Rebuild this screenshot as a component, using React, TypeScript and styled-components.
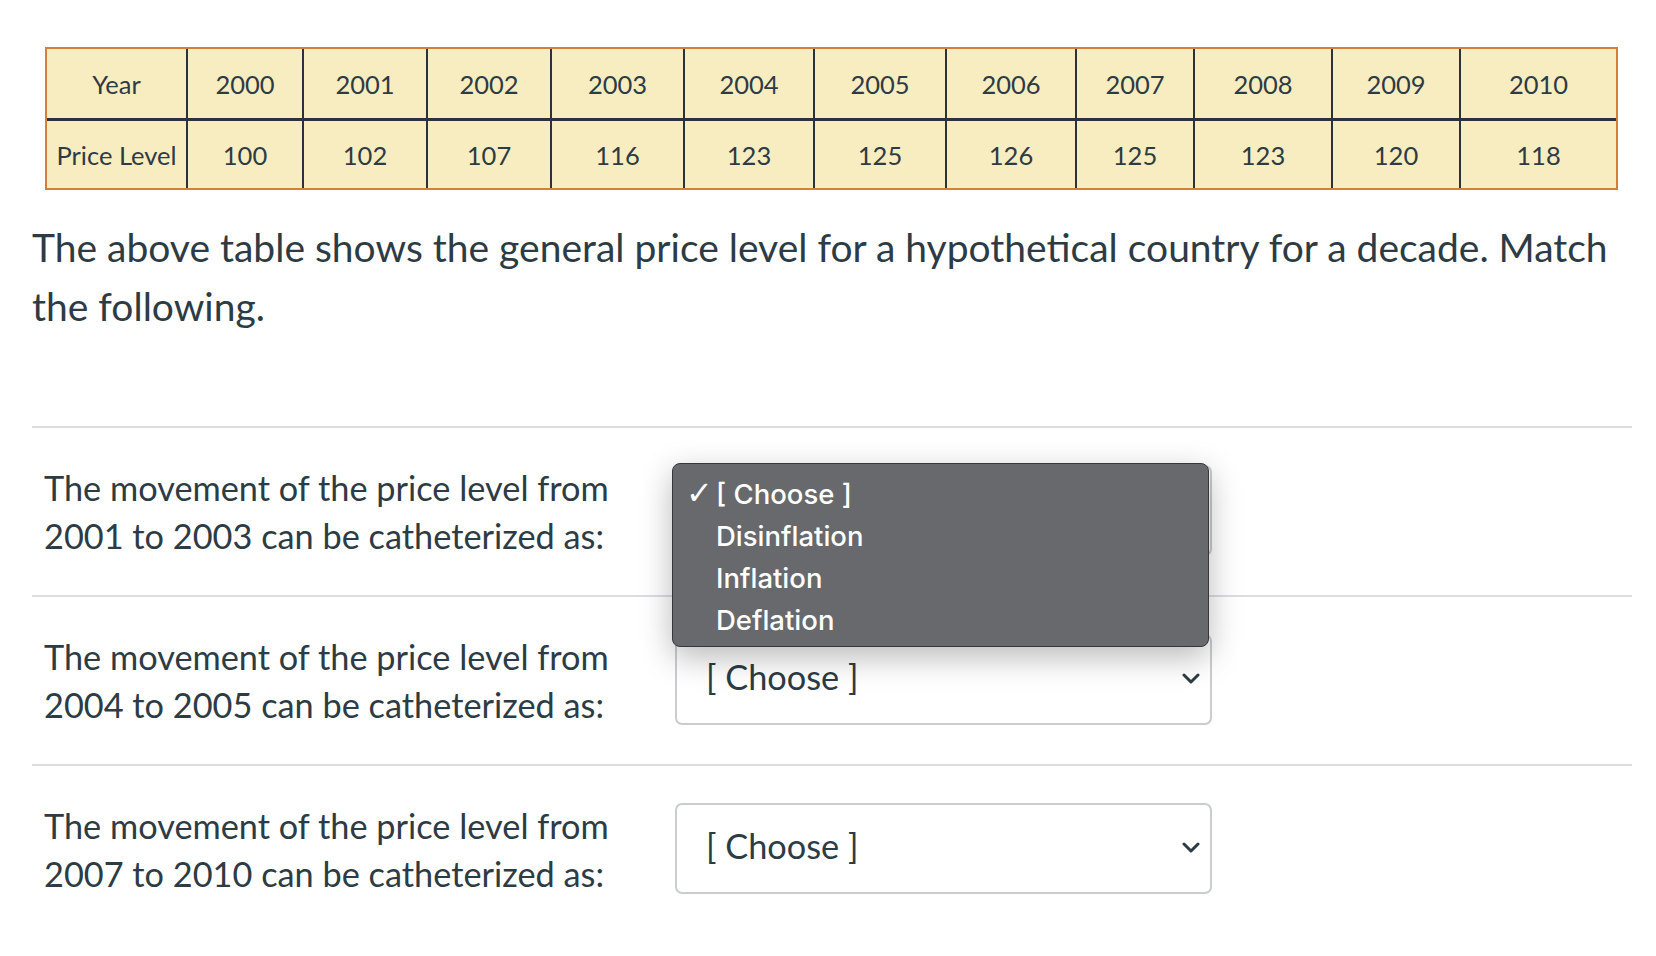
import styled, { createGlobalStyle } from "styled-components";

const GlobalStyle = createGlobalStyle`
  body {
    margin: 0;
    background: #ffffff;
    font-family: Lato, "Noto Sans", sans-serif;
    color: #2d3b45;
  }
`;

const Page = styled.div`
  width: 1600px;
  padding: 47px 0 0 32px;
`;

const TableWrap = styled.div`
  margin: 0 14px 0 13px;
`;

const PriceTable = styled.table`
  width: 1573px;
  table-layout: fixed;
  border-collapse: separate;
  border-spacing: 0;
  border: 2px solid #d4803a;
  background: #f8edc1;
  font-size: 25.5px;
`;

const Cell = styled.td<{ $head?: boolean; $last?: boolean }>`
  height: ${(p) => (p.$head ? "68px" : "66px")};
  padding: 1px 6px 0;
  text-align: center;
  vertical-align: middle;
  white-space: nowrap;
  border-right: ${(p) => (p.$last ? "none" : "2px solid #2a333b")};
  border-bottom: ${(p) => (p.$head ? "3px solid #2a333b" : "none")};
`;

const Intro = styled.p`
  margin: 28px 0 0;
  font-size: 39px;
  line-height: 58.5px;
`;

const Questions = styled.div`
  margin-top: 91px;
`;

const Row = styled.div`
  display: flex;
  align-items: center;
  border-top: 2px solid #dcdddf;
  padding: 35.5px 0 35.5px 12px;
`;

const Label = styled.div`
  width: 590px;
  font-size: 34.3px;
  line-height: 48px;
`;

const SelectBox = styled.div`
  position: relative;
  box-sizing: border-box;
  width: 537px;
  height: 91px;
  margin-top: -2px;
  margin-left: 41px;
  border: 2px solid #c9cdd1;
  border-radius: 7px;
  display: flex;
  align-items: center;
  justify-content: space-between;
  padding: 0 10px 6px 29px;
  font-size: 34.3px;
`;

const Chevron = styled.svg`
  width: 18px;
  height: 11px;
  margin-top: 3px;
`;

const Menu = styled.div`
  position: absolute;
  top: -4px;
  left: -5px;
  box-sizing: border-box;
  width: 537px;
  padding: 8px 0 5px 13px;
  background: #67696c;
  border: 1px solid #35373a;
  border-radius: 8px;
  box-shadow: 0 10px 32px rgba(0, 0, 0, 0.28);
  font-family: Inter, "DejaVu Sans", sans-serif;
  font-weight: 500;
  font-size: 27.5px;
  color: #ffffff;
  z-index: 2;
`;

const MenuItem = styled.div`
  display: flex;
  align-items: baseline;
  line-height: 42px;
`;

const Check = styled.span`
  width: 30px;
  font-family: "DejaVu Sans", sans-serif;
  font-weight: 400;
  font-size: 32px;
`;

const years = ["2000", "2001", "2002", "2003", "2004", "2005", "2006", "2007", "2008", "2009", "2010"];
const prices = ["100", "102", "107", "116", "123", "125", "126", "125", "123", "120", "118"];
const widths = [141, 116, 124, 124, 133, 130, 132, 130, 118, 138, 128, 155];

const questions = [
  { from: "2001", to: "2003", open: true },
  { from: "2004", to: "2005", open: false },
  { from: "2007", to: "2010", open: false },
];

const options = ["[ Choose ]", "Disinflation", "Inflation", "Deflation"];

function Select({ open }: { open: boolean }) {
  return (
    <SelectBox>
      <span>[ Choose ]</span>
      <Chevron viewBox="0 0 18 11">
        <polyline points="2,2 9,9 16,2" fill="none" stroke="#2d3b45" strokeWidth="3" strokeLinecap="round" strokeLinejoin="round" />
      </Chevron>
      {open && (
        <Menu>
          {options.map((o, i) => (
            <MenuItem key={o}>
              <Check>{i === 0 ? "✓" : ""}</Check>
              {o}
            </MenuItem>
          ))}
        </Menu>
      )}
    </SelectBox>
  );
}

function App() {
  return (
    <Page>
      <GlobalStyle />
      <TableWrap>
        <PriceTable>
          <colgroup>
            {widths.map((w, i) => (
              <col key={i} style={{ width: w }} />
            ))}
          </colgroup>
          <tbody>
            <tr>
              <Cell $head>Year</Cell>
              {years.map((y, i) => (
                <Cell $head key={y} $last={i === years.length - 1}>
                  {y}
                </Cell>
              ))}
            </tr>
            <tr>
              <Cell>Price Level</Cell>
              {prices.map((p, i) => (
                <Cell key={i} $last={i === prices.length - 1}>
                  {p}
                </Cell>
              ))}
            </tr>
          </tbody>
        </PriceTable>
      </TableWrap>
      <Intro>
        The above table shows the general price level for a hypothetical country for a decade. Match the following.
      </Intro>
      <Questions>
        {questions.map((q) => (
          <Row key={q.from}>
            <Label>
              The movement of the price level from {q.from} to {q.to} can be catheterized as:
            </Label>
            <Select open={q.open} />
          </Row>
        ))}
      </Questions>
    </Page>
  );
}

export default App;
